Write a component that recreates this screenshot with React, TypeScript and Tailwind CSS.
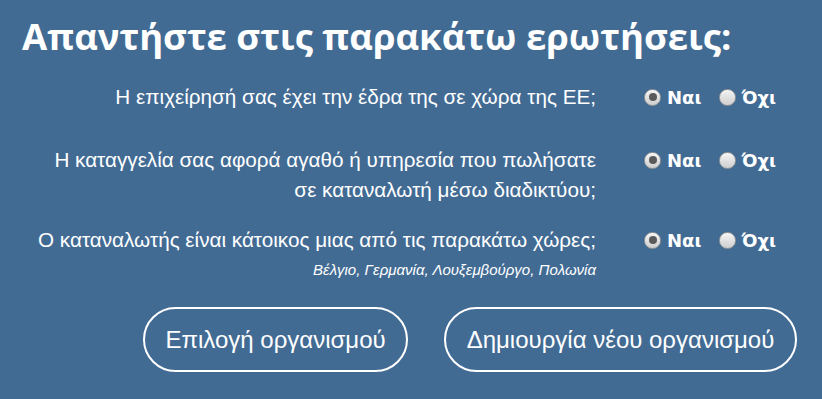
import React from "react";

function Radio({ checked }: { checked?: boolean }) {
  return (
    <span className="relative inline-flex h-[17px] w-[17px] items-center justify-center rounded-full border border-[#9a9a9a] bg-gradient-to-b from-[#f4f4f4] to-[#cfcfcf] shadow-[inset_0_1px_1px_rgba(255,255,255,0.8)]">
      {checked && <span className="h-[8px] w-[8px] rounded-full bg-[#5a5a5a]" />}
    </span>
  );
}

function YesNo() {
  return (
    <div className="flex h-[22px] items-center font-['DejaVu_Sans',sans-serif] text-[18px] font-bold text-white">
      <Radio checked />
      <span className="ml-[6px]">Ναι</span>
      <span className="ml-[18px] flex"><Radio /></span>
      <span className="ml-[5px]">Όχι</span>
    </div>
  );
}

export default function App() {
  return (
    <div className="h-[399px] w-[822px] overflow-hidden bg-[#426b94] font-['Liberation_Sans',Arial,sans-serif] text-white">
      <h1 className="pl-[22px] pt-[12px] font-['Open_Sans',sans-serif] text-[36.5px] font-bold leading-[48px]">
        Απαντήστε στις παρακάτω ερωτήσεις:
      </h1>
      <div className="mt-[22px] flex flex-col">
        <div className="flex items-start">
          <div className="w-[596px] text-right text-[20.7px] leading-[30px]">
            Η επιχείρησή σας έχει την έδρα της σε χώρα της ΕΕ;
          </div>
          <div className="ml-[48px] mt-[4px]"><YesNo /></div>
        </div>
        <div className="mt-[33px] flex items-start">
          <div className="w-[596px] text-right text-[20.7px] leading-[30px]">
            Η καταγγελία σας αφορά αγαθό ή υπηρεσία που πωλήσατε
            <br />
            σε καταναλωτή μέσω διαδικτύου;
          </div>
          <div className="ml-[48px] mt-[4px]"><YesNo /></div>
        </div>
        <div className="mt-[20px] flex items-start">
          <div className="w-[596px] text-right">
            <div className="text-[20.7px] leading-[30px]">
              Ο καταναλωτής είναι κάτοικος μιας από τις παρακάτω χώρες;
            </div>
            <div className="mt-[5px] text-[15px] italic leading-[20px]">
              Βέλγιο, Γερμανία, Λουξεμβούργο, Πολωνία
            </div>
          </div>
          <div className="ml-[48px] mt-[4px]"><YesNo /></div>
        </div>
      </div>
      <div className="mt-[27px] flex justify-end gap-[36px] pr-[25px]">
        <button className="h-[65px] w-[265px] rounded-full border-2 border-white text-[24px] text-white">
          Επιλογή οργανισμού
        </button>
        <button className="h-[65px] w-[353px] rounded-full border-2 border-white text-[24px] text-white">
          Δημιουργία νέου οργανισμού
        </button>
      </div>
    </div>
  );
}
